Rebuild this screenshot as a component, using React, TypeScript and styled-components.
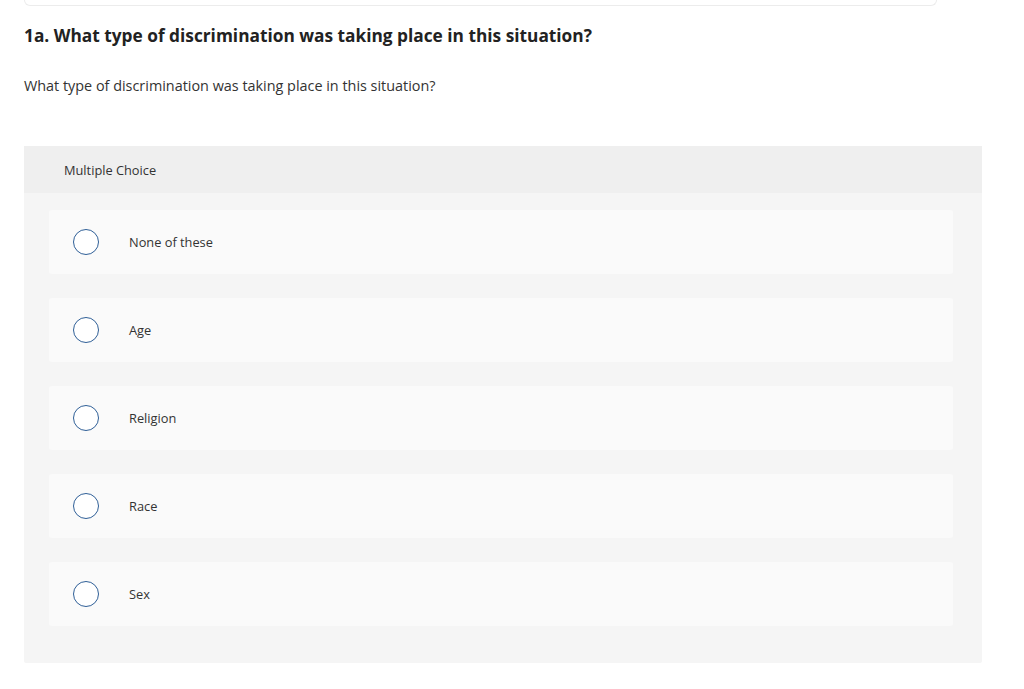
import styled, { createGlobalStyle } from 'styled-components';

const options = ['None of these', 'Age', 'Religion', 'Race', 'Sex'];

const GlobalStyle = createGlobalStyle`
  body {
    margin: 0;
    background: #fff;
    font-family: "Open Sans", "Liberation Sans", sans-serif;
    color: #333;
  }
`;

const App = () => {
  return (
    <Page>
      <GlobalStyle />
      <PrevCard />
      <Title>1a. What type of discrimination was taking place in this situation?</Title>
      <Prompt>What type of discrimination was taking place in this situation?</Prompt>
      <Panel>
        <PanelHeader>Multiple Choice</PanelHeader>
        <Choices>
          {options.map((label) => (
            <Choice key={label}>
              <Radio />
              <ChoiceLabel>{label}</ChoiceLabel>
            </Choice>
          ))}
        </Choices>
      </Panel>
    </Page>
  );
};

const Page = styled.main`
  display: flex;
  flex-direction: column;
  padding: 0 42px 40px 24px;
`;

const PrevCard = styled.div`
  width: 911px;
  height: 5px;
  border: 1px solid #ececec;
  border-top: none;
  border-radius: 0 0 6px 6px;
`;

const Title = styled.h2`
  margin: 18px 0 0;
  font-size: 17.3px;
  font-weight: 700;
  line-height: 24px;
  color: #222;
`;

const Prompt = styled.p`
  margin: 28px 0 0;
  font-size: 14.4px;
  line-height: 20px;
  color: #333;
`;

const Panel = styled.section`
  margin-top: 50px;
  background: #f5f5f5;
  border-radius: 2px;
`;

const PanelHeader = styled.div`
  display: flex;
  align-items: center;
  height: 47px;
  padding-left: 40px;
  background: #efefef;
  font-size: 12.8px;
  color: #333;
`;

const Choices = styled.div`
  display: flex;
  flex-direction: column;
  gap: 24px;
  padding: 17px 29px 37px 25px;
`;

const Choice = styled.div`
  display: flex;
  align-items: center;
  height: 64px;
  padding-left: 24px;
  background: #fafafa;
  border-radius: 3px;
`;

const Radio = styled.span`
  box-sizing: border-box;
  width: 26px;
  height: 26px;
  border: 1px solid #2f5f97;
  border-radius: 50%;
  background: #fff;
`;

const ChoiceLabel = styled.span`
  margin-left: 30px;
  font-size: 12.8px;
  color: #333;
`;

export default App;
